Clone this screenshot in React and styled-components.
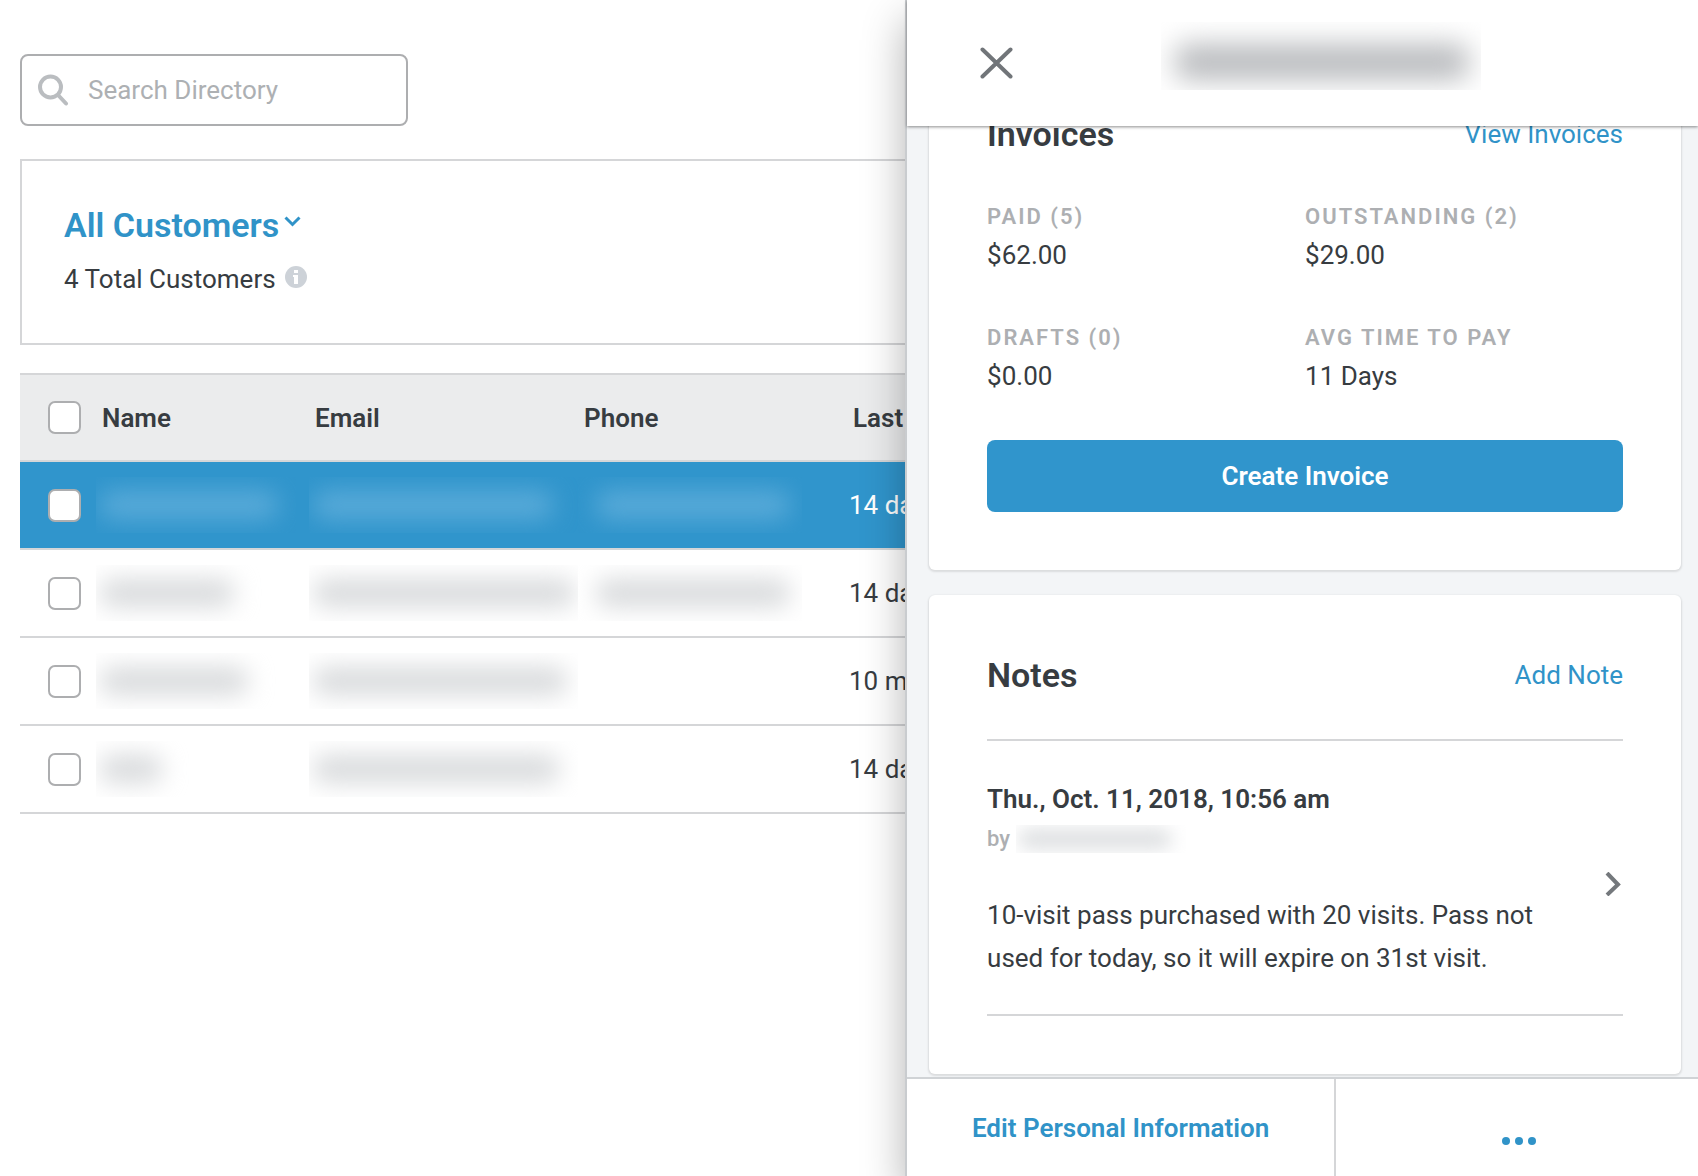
import React, { useState } from "react";
import styled, { createGlobalStyle } from "styled-components";

const GlobalStyle = createGlobalStyle`
  * {
    box-sizing: border-box;
  }
  body {
    margin: 0;
    background: #fff;
    color: #373c41;
    font-family: Roboto, "Liberation Sans", sans-serif;
    font-size: 26px;
    line-height: 36px;
  }
  button {
    padding: 0;
    border: none;
    background: none;
    color: inherit;
    font: inherit;
    cursor: pointer;
  }
`;

const Page = styled.div`
  position: relative;
  height: 100vh;
  min-height: 1100px;
  overflow: hidden;
`;

// Directory

const Directory = styled.main`
  padding: 54px 20px;
`;

const SearchBox = styled.label`
  display: flex;
  align-items: center;
  gap: 19px;
  width: 388px;
  height: 72px;
  padding: 0 16px;
  border: 2px solid #adaeb0;
  border-radius: 8px;
`;

const SearchInput = styled.input`
  flex: 1;
  min-width: 0;
  padding: 0;
  border: none;
  outline: none;
  background: none;
  color: inherit;
  font: inherit;

  &::placeholder {
    color: #adb0b3;
    opacity: 1;
  }
`;

const Summary = styled.section`
  margin: 33px 0 28px;
  padding: 42px 42px 46px;
  border: 2px solid #d5d6d8;
`;

const FilterButton = styled.button`
  display: flex;
  align-items: center;
  gap: 5px;
  margin-bottom: 14px;
  color: #3093c8;
  font-size: 34px;
  font-weight: 600;
  line-height: 44px;

  svg {
    margin-bottom: 8px;
  }
`;

const Total = styled.div`
  display: flex;
  align-items: center;
  gap: 9px;
`;

const InfoButton = styled.button`
  display: flex;
  padding-bottom: 4px;
`;

const Table = styled.table`
  width: 100%;
  table-layout: fixed;
  border-spacing: 0;
  text-align: left;
`;

const Col = styled.col`
  width: ${(props) => props.$width || "auto"};
`;

const HeadCell = styled.th`
  height: 89px;
  padding: 0 0 0 6px;
  border-top: 2px solid #d5d6d8;
  border-bottom: 2px solid #d5d6d8;
  background: #ebeced;
  font-weight: 600;
`;

const Row = styled.tr`
  background: ${(props) => (props.$selected ? "#3095cc" : "transparent")};
  color: ${(props) => (props.$selected ? "#fff" : "inherit")};
`;

const Cell = styled.td`
  height: 88px;
  padding: 0 0 0 ${(props) => (props.$inset ? "2px" : "0")};
  border-bottom: 2px solid #d5d6d8;
  white-space: nowrap;
`;

const Checkbox = styled.input.attrs({ type: "checkbox" })`
  display: block;
  width: 33px;
  height: 33px;
  margin: 0 0 0 ${(props) => (props.$head ? "22px" : "28px")};
  appearance: none;
  border: 2px solid #adaeb0;
  border-radius: 7px;
  background: #fff;

  &:checked {
    background: #3095cc;
  }
`;

// Private values are shown as a smudge cropped by its own box
const Private = styled.span`
  display: flex;
  align-items: center;
  width: ${(props) => props.$box};
  max-width: 100%;
  height: 56px;
  padding-left: ${(props) => props.$start || "4px"};
  overflow: hidden;

  &::before {
    content: "";
    flex: none;
    width: ${(props) => props.$bar};
    height: 28px;
    border-radius: 12px;
    background: ${(props) => props.$color || "#d8dadc"};
    filter: blur(12px);
  }
`;

const PrivateTitle = styled(Private)`
  height: 68px;
  margin-bottom: 14px;
  padding-top: 12px;

  &::before {
    height: 36px;
    filter: blur(14px);
  }
`;

const PrivateAuthor = styled(Private)`
  height: 28px;

  &::before {
    height: 20px;
    filter: blur(9px);
  }
`;

// Drawer

const Drawer = styled.aside`
  position: absolute;
  top: 0;
  right: 0;
  bottom: 0;
  display: flex;
  flex-direction: column;
  width: 46.7%;
  min-width: 640px;
  border-left: 2px solid #c9cccf;
  background: #f3f5f7;
  box-shadow: 0 20px 40px rgba(0, 0, 0, 0.3);
`;

const DrawerHeader = styled.header`
  z-index: 1;
  display: flex;
  align-items: center;
  flex: none;
  height: 126px;
  padding: 0 70px 0 73px;
  background: #fff;
  box-shadow: 0 1px 3px rgba(0, 0, 0, 0.45);
`;

const CloseButton = styled.button`
  display: flex;
`;

const TitleSlot = styled.div`
  display: flex;
  justify-content: center;
  flex: 1;
`;

// Anchored to the bottom, so the first card slides under the header
const DrawerBody = styled.div`
  display: flex;
  flex: 1;
  flex-direction: column;
  justify-content: flex-end;
  gap: 25px;
  min-height: 0;
  padding: 0 17px 3px 22px;
  overflow: hidden;
`;

const Card = styled.section`
  flex: none;
  padding: 58px;
  border-radius: 6px;
  background: #fff;
  box-shadow: 0 1px 2px 1px rgba(0, 0, 0, 0.1);
`;

const CardHeader = styled.div`
  display: flex;
  align-items: center;
  justify-content: space-between;
`;

const CardTitle = styled.h2`
  margin: 0;
  font-size: 34px;
  font-weight: 600;
  line-height: 44px;
`;

const CardLink = styled.a`
  color: #3093c8;
  text-decoration: none;
`;

const Stats = styled.dl`
  display: grid;
  grid-template-columns: 1fr 1fr;
  row-gap: 49px;
  margin: 45px 0 46px;
`;

const StatLabel = styled.dt`
  margin-bottom: 4px;
  color: #adafb2;
  font-size: 22px;
  font-weight: 600;
  letter-spacing: 2px;
  line-height: 32px;
  text-transform: uppercase;
`;

const StatValue = styled.dd`
  margin: 0;
`;

const PrimaryButton = styled.button`
  display: block;
  width: 100%;
  height: 72px;
  border-radius: 8px;
  background: #3095cc;
  color: #fff;
  font-weight: 600;
`;

const Note = styled.article`
  display: flex;
  align-items: center;
  justify-content: space-between;
  margin-top: 42px;
  padding: 40px 0 34px;
  border-top: 2px solid #d5d6d8;
  border-bottom: 2px solid #d5d6d8;
`;

const NoteDate = styled.h3`
  margin: 0 0 6px;
  font-size: 26px;
  font-weight: 600;
`;

const NoteAuthor = styled.div`
  display: flex;
  align-items: center;
  gap: 6px;
  margin-bottom: 39px;
  color: #adafb2;
  font-size: 22px;
  font-weight: 500;
  line-height: 32px;
`;

const NoteText = styled.p`
  max-width: 560px;
  margin: 0;
  line-height: 43px;
`;

const OpenButton = styled.button`
  display: flex;
  flex: none;
  padding: 6px 2px 0 0;
`;

const DrawerFooter = styled.footer`
  z-index: 1;
  display: grid;
  grid-template-columns: 427fr 364fr;
  flex: none;
  height: 99px;
  border-top: 2px solid #d0d3d6;
  background: #fff;
`;

const FooterButton = styled.button`
  display: flex;
  align-items: center;
  justify-content: center;
  color: #3093c8;
  font-weight: 600;

  & + & {
    padding: 26px 0 0 4px;
    border-left: 2px solid #d5d6d8;
  }
`;

const SearchIcon = () => (
  <svg width="31" height="32" viewBox="0 0 31 32" fill="none" stroke="#babdc0" aria-hidden="true">
    <circle cx="12.500" cy="13" r="10.500" strokeWidth="4" />
    <path d="M20.500 21.500l7.500 8" strokeWidth="4" strokeLinecap="round" />
  </svg>
);

const CaretIcon = () => (
  <svg width="17" height="11" viewBox="0 0 17 11" fill="none" aria-hidden="true">
    <path d="M1.500 1.500l7 7 7-7" stroke="#3093c8" strokeWidth="3" />
  </svg>
);

const InfoIcon = () => (
  <svg width="22" height="22" viewBox="0 0 22 22" aria-hidden="true">
    <circle cx="11" cy="11" r="11" fill="#cdd2d8" />
    <path d="M9 4h4v3H9zM8 9h5v9H9v-7H8z" fill="#fff" />
  </svg>
);

const CloseIcon = () => (
  <svg width="33" height="32" viewBox="0 0 33 32" fill="none" aria-hidden="true">
    <path d="M2.500 2.500l28 27M30.500 2.500l-28 27" stroke="#717579" strokeWidth="4" strokeLinecap="round" />
  </svg>
);

const ArrowIcon = () => (
  <svg width="16" height="24" viewBox="0 0 16 24" fill="none" aria-hidden="true">
    <path d="M2 1l11 11.500L2 23" stroke="#74787c" strokeWidth="4" />
  </svg>
);

const DotsIcon = () => (
  <svg width="34" height="8" viewBox="0 0 34 8" fill="#3093c8" aria-hidden="true">
    <circle cx="4" cy="4" r="4" />
    <circle cx="17" cy="4" r="4" />
    <circle cx="30" cy="4" r="4" />
  </svg>
);

const customers = [
  { id: 1, name: "178px", email: "240px", phone: "194px", last: "14 days ago" },
  { id: 2, name: "134px", email: "262px", phone: "194px", last: "14 days ago" },
  { id: 3, name: "148px", email: "254px", last: "10 months ago" },
  { id: 4, name: "62px", email: "246px", last: "14 days ago" },
];

const stats = [
  { label: "Paid (5)", value: "$62.00" },
  { label: "Outstanding (2)", value: "$29.00" },
  { label: "Drafts (0)", value: "$0.00" },
  { label: "Avg time to pay", value: "11 Days" },
];

const CustomerTable = ({ selectedId, onSelect }) => (
  <Table>
    <colgroup>
      <Col $width="76px" />
      <Col $width="213px" />
      <Col $width="269px" />
      <Col $width="269px" />
      <Col />
    </colgroup>
    <thead>
      <tr>
        <HeadCell>
          <Checkbox $head aria-label="Select all customers" />
        </HeadCell>
        <HeadCell>Name</HeadCell>
        <HeadCell>Email</HeadCell>
        <HeadCell>Phone</HeadCell>
        <HeadCell>Last Visited</HeadCell>
      </tr>
    </thead>
    <tbody>
      {customers.map((customer) => {
        const selected = customer.id === selectedId;
        const color = selected ? "#5aabd9" : undefined;
        return (
          <Row key={customer.id} $selected={selected} onClick={() => onSelect(customer.id)}>
            <Cell>
              <Checkbox aria-label={`Select customer ${customer.id}`} />
            </Cell>
            <Cell>
              <Private $box="200px" $bar={customer.name} $color={color} />
            </Cell>
            <Cell>
              <Private $box="269px" $bar={customer.email} $color={color} />
            </Cell>
            <Cell>
              {customer.phone && (
                <Private $box="224px" $start="18px" $bar={customer.phone} $color={color} />
              )}
            </Cell>
            <Cell $inset>{customer.last}</Cell>
          </Row>
        );
      })}
    </tbody>
  </Table>
);

const App = () => {
  const [search, setSearch] = useState("");
  const [selectedId, setSelectedId] = useState(1);

  return (
    <>
      <GlobalStyle />
      <Page>
        <Directory>
          <SearchBox>
            <SearchIcon />
            <SearchInput
              type="text"
              aria-label="Search Directory"
              placeholder="Search Directory"
              value={search}
              onChange={(e) => setSearch(e.target.value)}
            />
          </SearchBox>
          <Summary>
            <FilterButton>
              All Customers
              <CaretIcon />
            </FilterButton>
            <Total>
              4 Total Customers
              <InfoButton aria-label="About this total">
                <InfoIcon />
              </InfoButton>
            </Total>
          </Summary>
          <CustomerTable selectedId={selectedId} onSelect={setSelectedId} />
        </Directory>

        <Drawer>
          <DrawerHeader>
            <CloseButton aria-label="Close">
              <CloseIcon />
            </CloseButton>
            <TitleSlot>
              <PrivateTitle $box="320px" $start="14px" $bar="294px" $color="#b9bbbe" />
            </TitleSlot>
          </DrawerHeader>

          <DrawerBody>
            <Card>
              <CardHeader>
                <CardTitle>Invoices</CardTitle>
                <CardLink href="#invoices">View Invoices</CardLink>
              </CardHeader>
              <Stats>
                {stats.map((stat) => (
                  <div key={stat.label}>
                    <StatLabel>{stat.label}</StatLabel>
                    <StatValue>{stat.value}</StatValue>
                  </div>
                ))}
              </Stats>
              <PrimaryButton>Create Invoice</PrimaryButton>
            </Card>

            <Card>
              <CardHeader>
                <CardTitle>Notes</CardTitle>
                <CardLink href="#add-note">Add Note</CardLink>
              </CardHeader>
              <Note>
                <div>
                  <NoteDate>Thu., Oct. 11, 2018, 10:56 am</NoteDate>
                  <NoteAuthor>
                    by
                    <PrivateAuthor $box="170px" $start="2px" $bar="154px" $color="#dddfe1" />
                  </NoteAuthor>
                  <NoteText>
                    10-visit pass purchased with 20 visits. Pass not used for today, so it will
                    expire on 31st visit.
                  </NoteText>
                </div>
                <OpenButton aria-label="Open note">
                  <ArrowIcon />
                </OpenButton>
              </Note>
            </Card>
          </DrawerBody>

          <DrawerFooter>
            <FooterButton>Edit Personal Information</FooterButton>
            <FooterButton aria-label="More actions">
              <DotsIcon />
            </FooterButton>
          </DrawerFooter>
        </Drawer>
      </Page>
    </>
  );
};

export default App;
